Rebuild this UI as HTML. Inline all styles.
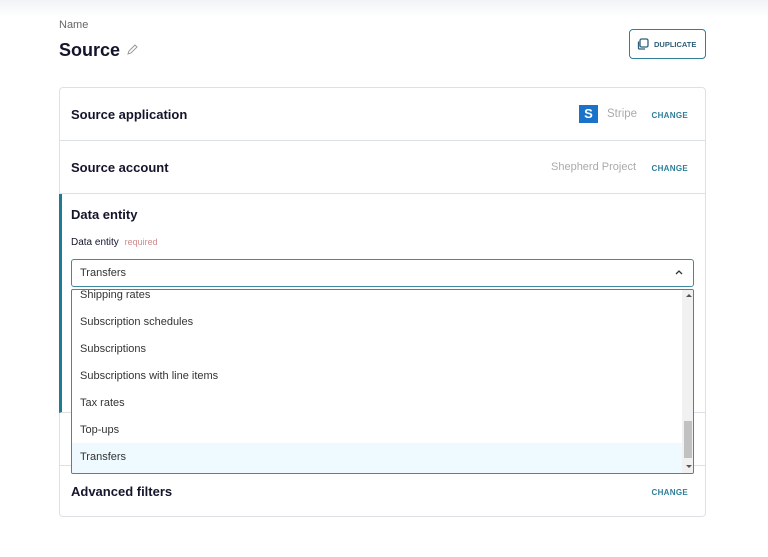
<!DOCTYPE html>
<html><head><style>
*{box-sizing:border-box;margin:0;padding:0}
body{width:768px;height:557px;background:#fff;font-family:"Liberation Sans",sans-serif;position:relative;overflow:hidden;color:#14142b}
.top{position:absolute;left:0;top:0;width:768px;height:18px;background:linear-gradient(#f1f3f6,#fff)}
.abs{position:absolute}
.card{position:absolute;left:59px;top:87px;width:647px;height:430px;border:1px solid #dde1e5;border-radius:4px}
.row{position:absolute;left:0;width:645px;border-bottom:1px solid #dde1e5}
.h{position:absolute;left:11px;font-weight:bold;font-size:13px;color:#14142b}
.chg{position:absolute;right:17px;font-size:8px;font-weight:bold;color:#2f7f99;letter-spacing:.3px}
.opt{position:absolute;left:8px;font-size:11px;color:#333}
</style></head><body>
<div class="top"></div>
<div class="abs" style="left:59px;top:19px;font-size:11px;color:#666">Name</div>
<div class="abs" style="left:59px;top:40px;font-size:18px;font-weight:bold">Source</div>
<svg class="abs" style="left:126px;top:43px" width="13" height="13" viewBox="0 0 13 13"><path d="M2 11 L3 8 L9 2 L11 4 L5 10 Z" fill="none" stroke="#999" stroke-width="1"/></svg>
<div class="abs" style="left:629px;top:29px;width:77px;height:30px;border:1px solid #2f7f99;border-radius:4px"></div>
<svg class="abs" style="left:637px;top:38px" width="13" height="12" viewBox="0 0 13 12"><rect x="3" y="1" width="8" height="8" rx="1.5" fill="none" stroke="#2f5f78" stroke-width="1.3"/><path d="M1.5 3.5 V10 a1 1 0 0 0 1 1 H8" fill="none" stroke="#2f5f78" stroke-width="1.3"/></svg>
<div class="abs" style="left:654px;top:40px;font-size:7.5px;font-weight:bold;color:#2f5f78">DUPLICATE</div>
<div class="card">
 <div class="row" style="top:0;height:53px"><div class="h" style="top:19px">Source application</div>
  <div class="abs" style="left:519px;top:17px;width:19px;height:18px;background:#1a73c8;color:#fff;font-weight:bold;font-size:13px;text-align:center;line-height:18px">S</div>
  <div class="abs" style="left:547px;top:20px;font-size:11.5px;color:#aaa">Stripe</div>
  <div class="chg" style="top:23px">CHANGE</div></div>
 <div class="row" style="top:53px;height:53px"><div class="h" style="top:19px">Source account</div>
  <div class="abs" style="left:491px;top:20px;font-size:11px;color:#aaa">Shepherd Project</div>
  <div class="chg" style="top:23px">CHANGE</div></div>
 <div class="row" style="top:106px;height:219px;border-left:3px solid #1f7a94;left:-1px;width:646px"><div class="h" style="top:13px;left:9px">Data entity</div>
  <div class="abs" style="left:9px;top:43px;font-size:10px;color:#14142b">Data entity <span style="color:#d08a8a;font-size:9px;margin-left:3px">required</span></div></div>
 <div class="row" style="top:325px;height:53px"></div>
 <div class="h" style="top:396px">Advanced filters</div>
 <div class="chg" style="top:400px">CHANGE</div>
</div>
<div class="abs" style="left:71px;top:259px;width:623px;height:28px;border:1px solid #3f8a9e;border-radius:3px;background:#fff"></div>
<div class="abs" style="left:80px;top:267px;font-size:11px;color:#333">Transfers</div>
<svg class="abs" style="left:675px;top:269px" width="8" height="6"><path d="M1 5 L4 2 L7 5" fill="none" stroke="#333" stroke-width="1.3"/></svg>
<div class="abs" style="left:71px;top:289px;width:623px;height:185px;border:1px solid #3f8a9e;border-radius:2px;background:#fff;overflow:hidden">
 <div class="opt" style="top:-1px">Shipping rates</div>
 <div class="opt" style="top:26px">Subscription schedules</div>
 <div class="opt" style="top:53px">Subscriptions</div>
 <div class="opt" style="top:80px">Subscriptions with line items</div>
 <div class="opt" style="top:107px">Tax rates</div>
 <div class="opt" style="top:134px">Top-ups</div>
 <div class="abs" style="left:0;top:153px;width:610px;height:30px;background:#eefaff"></div>
 <div class="opt" style="top:161px">Transfers</div>
 <div class="abs" style="left:610px;top:0;width:12px;height:183px;background:#f1f1f1"></div>
 <div class="abs" style="left:612px;top:131px;width:8px;height:37px;background:#c1c1c1"></div>
 <div class="abs" style="left:614px;top:4px;border:3px solid transparent;border-bottom:3px solid #555;border-top:0"></div>
 <div class="abs" style="left:614px;top:175px;border:3px solid transparent;border-top:3px solid #555;border-bottom:0"></div>
</div>
</body></html>
